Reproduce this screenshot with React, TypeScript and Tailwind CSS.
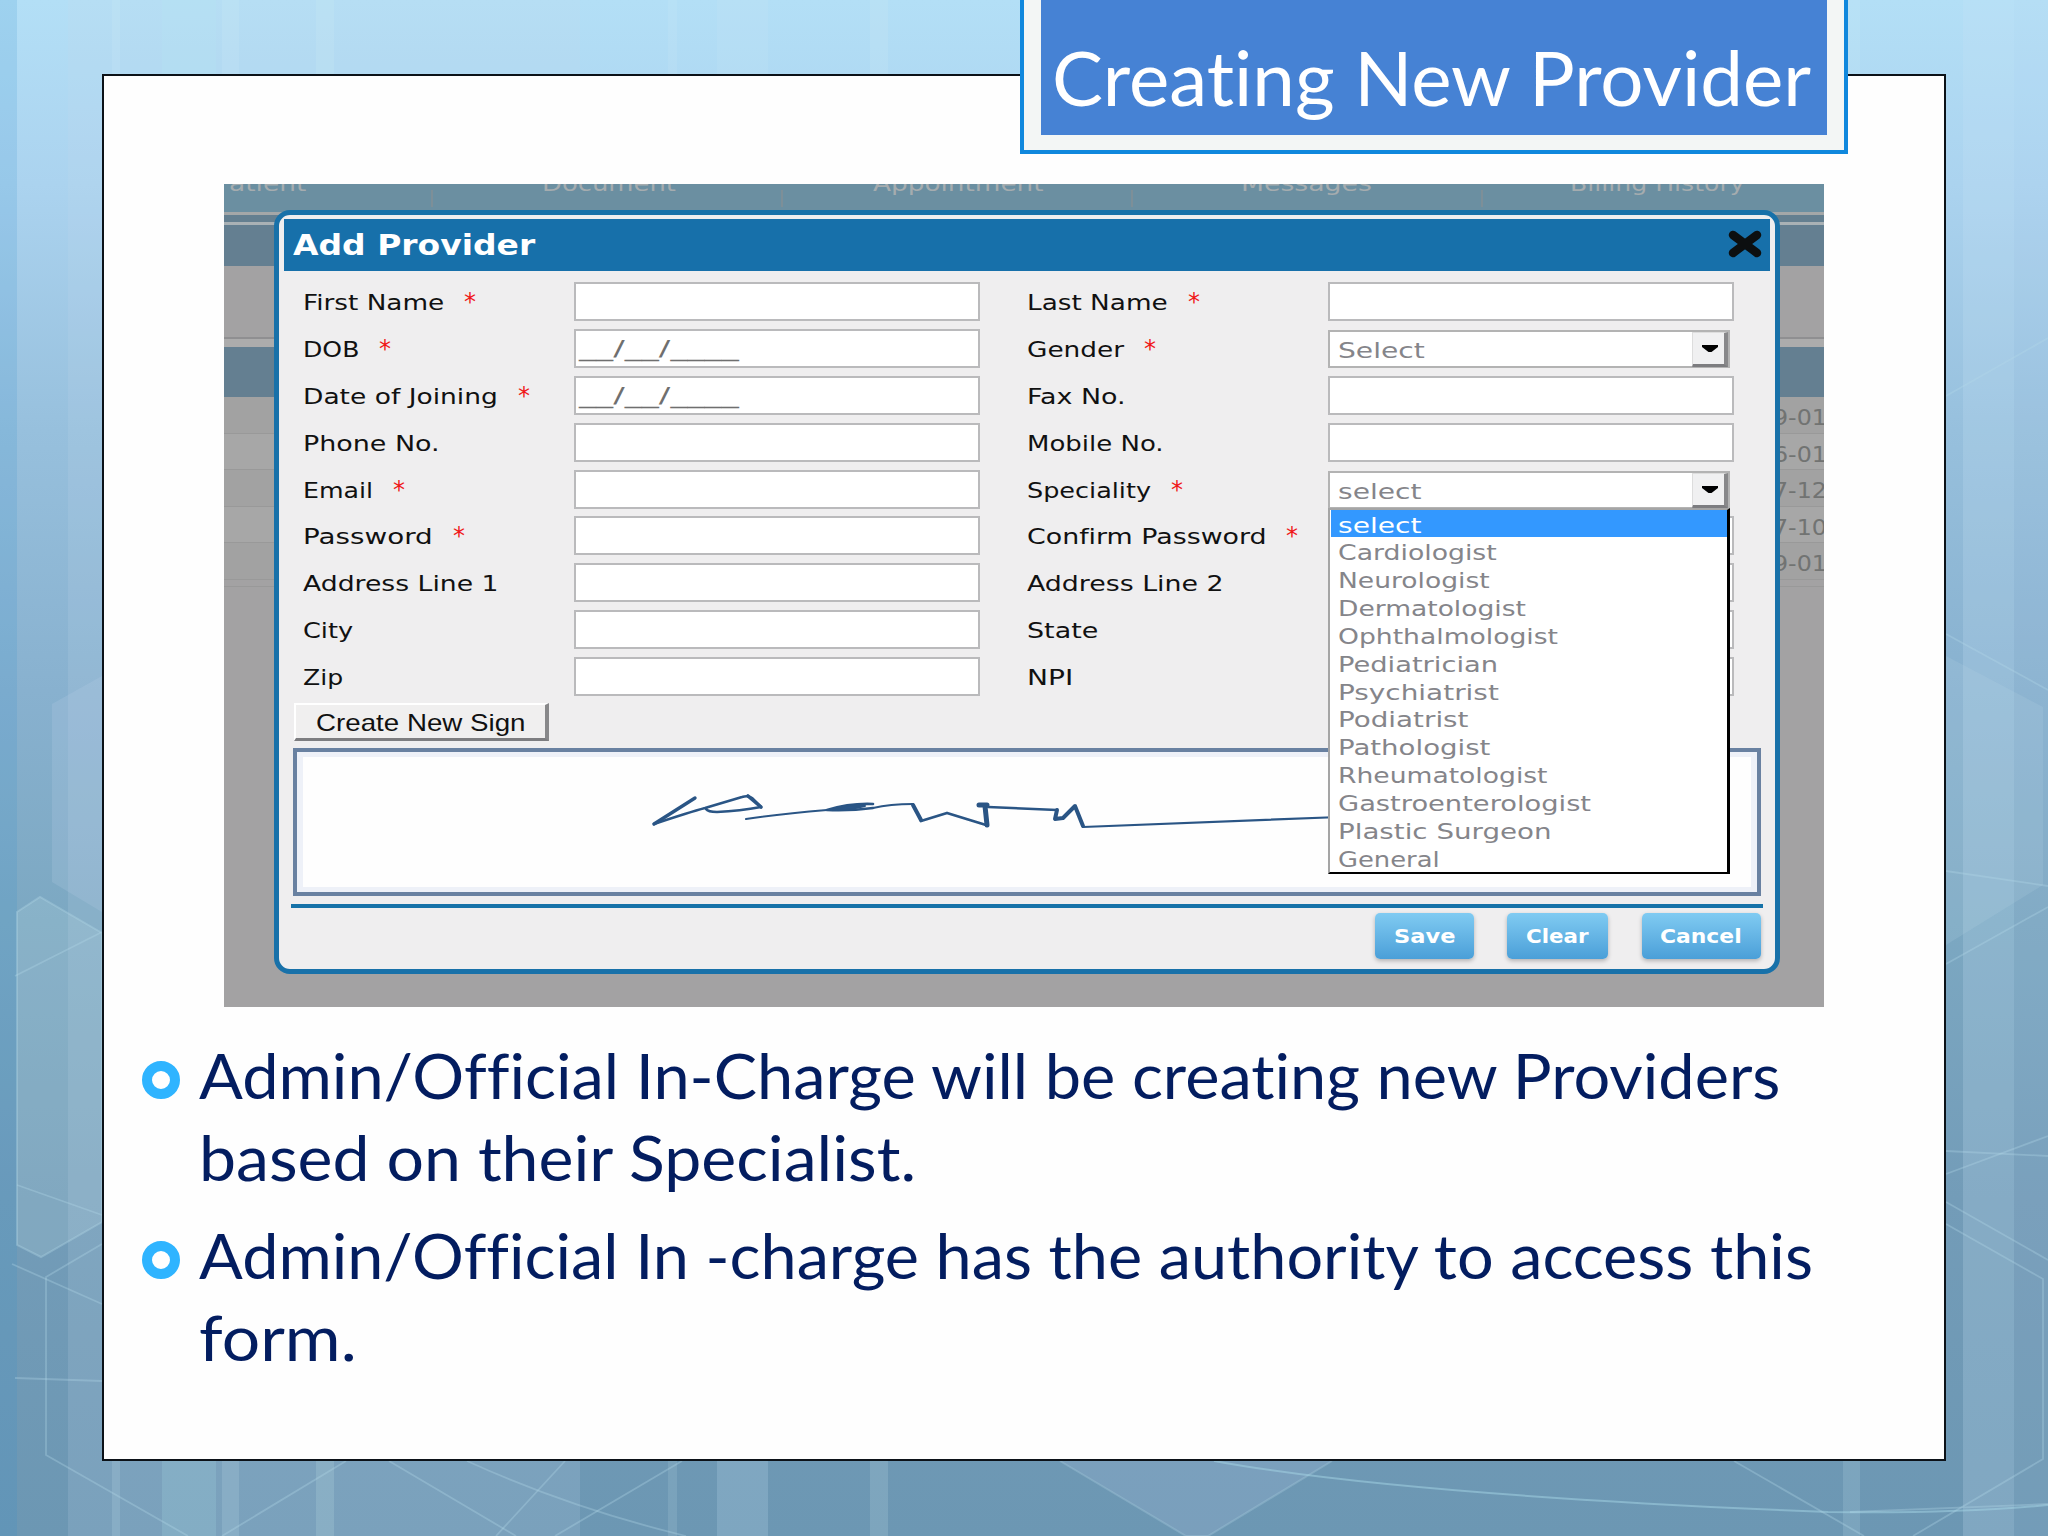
import { useLayoutEffect, useRef, useState } from 'react';

interface FitProps {
  text: string;
  width: number;
  className?: string;
}

// Single line of text stretched horizontally to a given width
function Fit({ text, width, className = '' }: FitProps) {
  const ref = useRef<HTMLSpanElement>(null);
  const [scale, setScale] = useState(1);

  useLayoutEffect(() => {
    if (ref.current) {
      setScale(width / ref.current.offsetWidth);
    }
  }, [text, width]);

  return (
    <span className={`block shrink-0 whitespace-nowrap ${className}`} style={{ width }}>
      <span ref={ref} className="inline-block origin-left" style={{ transform: `scaleX(${scale})` }}>
        {text}
      </span>
    </span>
  );
}

type FieldKind = 'text' | 'date' | 'select' | 'speciality';

interface Field {
  label: string;
  width: number;
  required?: boolean;
  kind?: FieldKind;
}

const leftFields: Field[] = [
  { label: 'First Name', width: 141, required: true },
  { label: 'DOB', width: 56, required: true, kind: 'date' },
  { label: 'Date of Joining', width: 195, required: true, kind: 'date' },
  { label: 'Phone No.', width: 137 },
  { label: 'Email', width: 70, required: true },
  { label: 'Password', width: 130, required: true },
  { label: 'Address Line 1', width: 195 },
  { label: 'City', width: 50 },
  { label: 'Zip', width: 40 },
];

const rightFields: Field[] = [
  { label: 'Last Name', width: 141, required: true },
  { label: 'Gender', width: 97, required: true, kind: 'select' },
  { label: 'Fax No.', width: 99 },
  { label: 'Mobile No.', width: 137 },
  { label: 'Speciality', width: 124, required: true, kind: 'speciality' },
  { label: 'Confirm Password', width: 239, required: true },
  { label: 'Address Line 2', width: 196 },
  { label: 'State', width: 71 },
  { label: 'NPI', width: 46 },
];

const specialities = [
  { name: 'select', width: 83 },
  { name: 'Cardiologist', width: 159 },
  { name: 'Neurologist', width: 152 },
  { name: 'Dermatologist', width: 188 },
  { name: 'Ophthalmologist', width: 220 },
  { name: 'Pediatrician', width: 160 },
  { name: 'Psychiatrist', width: 161 },
  { name: 'Podiatrist', width: 130 },
  { name: 'Pathologist', width: 153 },
  { name: 'Rheumatologist', width: 209 },
  { name: 'Gastroenterologist', width: 253 },
  { name: 'Plastic Surgeon', width: 214 },
  { name: 'General', width: 102 },
];

const bands = [
  { x: 0, w: 17, fill: '#2f8fd0', o: 0.16 },
  { x: 68, w: 512, fill: '#c9d8ee', o: 0.16 },
  { x: 112, w: 8, fill: '#d5f0f5', o: 0.15 },
  { x: 162, w: 54, fill: '#b5ecf0', o: 0.16 },
  { x: 222, w: 17, fill: '#d5f0f5', o: 0.15 },
  { x: 316, w: 18, fill: '#d5f0f5', o: 0.16 },
  { x: 668, w: 9, fill: '#d5f0f5', o: 0.13 },
  { x: 717, w: 51, fill: '#c9e4f5', o: 0.2 },
  { x: 870, w: 18, fill: '#d5f0f5', o: 0.17 },
  { x: 1843, w: 17, fill: '#d5f0f5', o: 0.15 },
  { x: 1963, w: 51, fill: '#c9e4f5', o: 0.22 },
  { x: 2014, w: 34, fill: '#c9d8ee', o: 0.08 },
];

const lines = [
  'M15 976 102 932',
  'M17 1185 102 1215',
  'M12 1264 102 1304',
  'M15 1378 102 1381',
  'M102 1244 46 1277V1455L188 1536',
  'M222 1536 346 1461',
  'M389 1461 516 1536',
  'M467 1461Q570 1508 686 1536',
  'M565 1461 496 1536',
  'M682 1461 555 1536',
  'M1734 1461 1864 1536',
  'M1913 1536 2043 1459V1279L1946 1224',
  'M1946 396 2048 338',
  'M1946 634 2048 690',
  'M1946 871 2048 886',
  'M1946 964 2048 907',
  'M1946 1151 2048 1156',
  'M1946 1174 2048 1136',
  'M1946 1202 2048 1260',
  'M1850 1512 2048 1504',
];

function Backdrop() {
  return (
    <svg className="absolute inset-0" width="2048" height="1536" viewBox="0 0 2048 1536" fill="none">
      <defs>
        <linearGradient id="sky" x1="0" y1="0" x2="0" y2="1">
          <stop offset="0" stopColor="#b3dff6" />
          <stop offset="0.12" stopColor="#abd3ef" />
          <stop offset="0.28" stopColor="#97c0dd" />
          <stop offset="0.45" stopColor="#88b1cf" />
          <stop offset="0.6" stopColor="#7ca8c2" />
          <stop offset="0.78" stopColor="#739cb8" />
          <stop offset="1" stopColor="#6c97b3" />
        </linearGradient>
      </defs>
      <rect width="2048" height="1536" fill="url(#sky)" />
      {bands.map((b) => (
        <rect key={b.x} x={b.x} width={b.w} height="1536" fill={b.fill} opacity={b.o} />
      ))}
      <path d="M52 704 102 676V912L52 882Z" fill="#c0d0ec" opacity="0.2" />
      <path d="M1946 656 2043 707V885L1946 945Z" fill="#c0dcec" opacity="0.15" />
      <path
        d="M17 912 40 897 102 933V1222L41 1257 17 1245Z"
        fill="#b8d4e0"
        fillOpacity="0.22"
        stroke="#b5dbe8"
        strokeOpacity="0.35"
        strokeWidth="2"
      />
      <path
        d="M1060 1461 1186 1536H1208L1332 1461"
        fill="#a5b8d8"
        fillOpacity="0.25"
        stroke="#a5cbdc"
        strokeOpacity="0.35"
        strokeWidth="2"
      />
      <path d="M1214 1461Q1400 1495 1828 1512Q1950 1514 2048 1505" stroke="#a5d5e5" strokeOpacity="0.5" strokeWidth="2" />
      {lines.map((d) => (
        <path key={d} d={d} stroke="#b5dbe8" strokeOpacity="0.32" strokeWidth="1.8" />
      ))}
    </svg>
  );
}

const navItems = [
  { text: 'atient', width: 77, cell: 'w-[209px] pl-[5px]' },
  { text: 'Document', width: 134, cell: 'w-[350px] pl-[109px]' },
  { text: 'Appointment', width: 171, cell: 'w-[350px] pl-[90px]' },
  { text: 'Messages', width: 131, cell: 'w-[350px] pl-[108px]' },
  { text: 'Billing History', width: 175, cell: 'w-[341px] pl-[87px]' },
];

const dates = ['9-01', '6-01', '7-12', '7-10', '9-01'];

// Greyed-out page behind the dialog
function DimmedPage() {
  return (
    <div className="flex h-full w-full flex-col bg-[#a3a2a3] text-[22px]">
      <div className="flex h-[28px] shrink-0 overflow-hidden bg-[#6b8fa1] text-[#a5acaf]">
        {navItems.map((item) => (
          <div key={item.text} className={`flex shrink-0 ${item.cell}`}>
            <Fit text={item.text} width={item.width} className="-mt-[15px] h-[30px] leading-[30px]" />
            {item.text !== 'Billing History' && <div className="mt-[6px] ml-auto h-[17px] w-[2px] bg-[#7d8f98]" />}
          </div>
        ))}
      </div>
      <div className="h-[3px] shrink-0 bg-[#a4a7a8]" />
      <div className="h-[7px] shrink-0 bg-[#647f90]" />
      <div className="h-[3px] shrink-0 bg-[#a9b1b5]" />
      <div className="h-[41px] shrink-0 bg-[#647f91]" />
      <div className="h-[73px] shrink-0 border-b-2 border-[#8f8f91] bg-[#a3a2a3]" />
      <div className="h-[8px] shrink-0 bg-[#acacac]" />
      <div className="h-[50px] shrink-0 bg-[#647f91]" />
      {dates.map((date, i) => (
        <div
          key={i}
          className={`flex h-[36.5px] shrink-0 justify-end overflow-hidden border-b border-[#999999] leading-[42px] text-[#717372] ${
            i % 2 === 0 ? 'bg-[#a2a2a2]' : 'bg-[#a7a7a7]'
          }`}
        >
          <Fit text={date} width={54} className="-mr-[3px]" />
        </div>
      ))}
      <div className="h-[7px] border-b border-[#999999]" />
    </div>
  );
}

function SelectBox({ text, width }: { text: string; width: number }) {
  return (
    <div className="mt-px flex h-[38px] w-[402px] border-2 border-[#b3b3b3] bg-white pl-[8px]">
      <Fit text={text} width={width} className="leading-[37px] text-[#85858a]" />
      <div className="ml-auto flex h-[35px] w-[36px] items-center justify-center border-t border-r-4 border-b-3 border-l border-t-[#dddddd] border-r-[#88888a] border-b-[#7d7d80] border-l-[#dddddd] bg-[#f0f0f1]">
        <svg className="ml-[2px]" width="16" height="7" viewBox="0 0 16 7">
          <path d="M0 0H16V2L9.500 7H6.500L0 2Z" fill="#000" />
        </svg>
      </div>
    </div>
  );
}

function SpecialityMenu() {
  return (
    <div className="absolute top-[38px] left-0 z-10 h-[366px] w-[402px] border-2 border-r-3 border-t-[#a5a5a5] border-r-black border-b-black border-l-[#a5a5a5] bg-white pl-px">
      {specialities.map((s, i) => (
        <div
          key={s.name}
          className={`h-[27.85px] pl-[7px] text-[22px] leading-[31px] ${
            i === 0 ? 'bg-[#3398ff] text-white' : 'text-[#85858a]'
          }`}
        >
          <Fit text={s.name} width={s.width} />
        </div>
      ))}
    </div>
  );
}

function FieldControl({ kind = 'text' }: { kind?: FieldKind }) {
  if (kind === 'select') {
    return <SelectBox text="Select" width={87} />;
  }
  if (kind === 'speciality') {
    return (
      <div className="relative">
        <SelectBox text="select" width={83} />
        <SpecialityMenu />
      </div>
    );
  }
  return (
    <div className="h-[39px] w-[406px] border-2 border-[#bababc] bg-white pl-[3px] leading-[35px] text-[#6f6f6f]">
      {kind === 'date' && <Fit text="__/__/____" width={160} />}
    </div>
  );
}

function FieldColumn({ fields, labelClass }: { fields: Field[]; labelClass: string }) {
  return (
    <div className="flex flex-col">
      {fields.map((field) => (
        <div key={field.label} className="flex h-[46.9px] shrink-0 items-start">
          <div className={`flex shrink-0 leading-[42px] ${labelClass}`}>
            <Fit text={field.label} width={field.width} />
            {field.required && <span className="ml-[20px] text-[24px] leading-[40px] text-[#f01818]">*</span>}
          </div>
          <FieldControl kind={field.kind} />
        </div>
      ))}
    </div>
  );
}

function Signature() {
  return (
    <svg
      className="ml-[337px]"
      width="720"
      height="130"
      viewBox="640 757 720 130"
      fill="none"
      stroke="#2a5585"
      strokeLinejoin="round"
      strokeLinecap="round"
    >
      <path d="M695 798 654 824" strokeWidth="3.4" />
      <path d="M654 824Q690 812 705 808L742 797Q748 795 752 798L761 807Q740 811 717 812 708 812 706 809" strokeWidth="2.6" />
      <path d="M748 796 761 807" strokeWidth="3.6" />
      <path d="M746 819Q780 814 827 810" strokeWidth="2" />
      <path d="M827 810Q850 803 873 804M827 810Q850 811 873 808" strokeWidth="2.6" />
      <path d="M831 810Q850 805 865 806 850 810 831 810" fill="#2a5a92" strokeWidth="2" />
      <path d="M873 808Q890 804 913 804" strokeWidth="2" />
      <path d="M913 805 921 820" strokeWidth="4" />
      <path d="M921 821 947 813 986 825" strokeWidth="2.8" />
      <path d="M979 805H987M985 806 987 825" strokeWidth="5" />
      <path d="M988 807 1057 810" strokeWidth="2.4" />
      <path d="M1057 810 1055 819 1063 818 1075 806 1083 826" strokeWidth="4" />
      <path d="M1083 827 1340 817" strokeWidth="2.2" />
    </svg>
  );
}

const actions = [
  { text: 'Save', width: 62, size: 'w-[99px]' },
  { text: 'Clear', width: 62, size: 'ml-[33px] w-[101px] pr-[2px]' },
  { text: 'Cancel', width: 82, size: 'ml-[34px] w-[119px] pr-[2px]' },
];

function AddProviderDialog() {
  return (
    <div className="absolute top-[26px] left-[50px] flex h-[764px] w-[1506px] flex-col rounded-[16px] border-5 border-[#1871a9] bg-[#efeeef] text-[22px] text-[#111111]">
      <div className="mx-[5px] mt-[4px] flex h-[52px] shrink-0 items-center bg-[#1770aa] pr-[8px] pl-[9px]">
        <Fit text="Add Provider" width={242} className="text-[29px] leading-[54px] font-bold text-white" />
        <svg className="mb-[3px] ml-auto" width="34" height="28" viewBox="0 0 34 28">
          <path d="M5 5 29 23M29 5 5 23" stroke="#0c0f10" strokeWidth="8.5" strokeLinecap="round" />
        </svg>
      </div>

      <div className="mt-[11px] flex h-[421px] shrink-0 pl-[24px]">
        <FieldColumn fields={leftFields} labelClass="w-[271px]" />
        <div className="ml-[47px]">
          <FieldColumn fields={rightFields} labelClass="w-[301px]" />
        </div>
      </div>

      <div className="ml-[15px] flex h-[38px] w-[255px] shrink-0 justify-center border-2 border-r-4 border-b-3 border-t-white border-r-[#88888a] border-b-[#7d7d80] border-l-white bg-[#f0efef] leading-[35px]">
        <Fit text="Create New Sign" width={209} className="font-['Liberation_Sans'] text-[24px]" />
      </div>

      <div className="mt-[7px] ml-[14px] h-[148px] w-[1468px] shrink-0 border-4 border-[#6981a1] bg-[#eef1f8] px-[6px] py-[5px]">
        <div className="h-full w-full overflow-hidden bg-[#fefefe]">
          <Signature />
        </div>
      </div>

      <div className="mt-[8px] ml-[12px] h-[4px] w-[1472px] shrink-0 bg-[#1672a8]" />

      <div className="mt-[5px] flex justify-end pr-[14px]">
        {actions.map((action) => (
          <button
            key={action.text}
            className={`flex h-[46px] items-center justify-center rounded-[5px] bg-linear-to-b from-[#80cbf2] to-[#4a9fd8] shadow-[0_2px_4px_rgba(0,0,0,0.25)] ${action.size}`}
          >
            <Fit text={action.text} width={action.width} className="text-left text-[20px] font-bold text-white" />
          </button>
        ))}
      </div>
    </div>
  );
}

const bullets = [
  [
    { text: 'Admin/Official In-Charge will be creating new Providers', width: 1581 },
    { text: 'based on their Specialist.', width: 717 },
  ],
  [
    { text: 'Admin/Official In -charge has the authority to access this', width: 1614 },
    { text: 'form.', width: 158 },
  ],
];

export default function App() {
  return (
    <div className="relative h-[1536px] w-[2048px] overflow-hidden font-['DejaVu_Sans',sans-serif] [font-variant-ligatures:none]">
      <Backdrop />

      <div className="relative mt-[74px] ml-[102px] h-[1387px] w-[1844px] border-2 border-[#0c1218] bg-[#fefefe] pt-[108px]">
        <div className="relative ml-[120px] h-[823px] w-[1600px] overflow-hidden">
          <DimmedPage />
          <AddProviderDialog />
        </div>

        <ul className="mt-[28px] flex flex-col gap-[16px] font-['Lato'] text-[61px] leading-[82px] text-[#031d60]">
          {bullets.map((bullet, i) => (
            <li key={i} className="flex">
              <span className="mt-[26px] mr-[19px] ml-[38px] h-[38px] w-[38px] shrink-0 rounded-full border-10 border-[#2fb4ff]" />
              <div>
                {bullet.map((line) => (
                  <Fit key={line.text} text={line.text} width={line.width} />
                ))}
              </div>
            </li>
          ))}
        </ul>
      </div>

      {/* Title tab over the top edge of the panel */}
      <div className="absolute top-0 left-[1020px] h-[154px] w-[828px] border-4 border-t-0 border-[#1088dd] bg-[#f3f6f5] px-[17px]">
        <div className="h-[135px] bg-[#4682d4] pt-[29px] pl-[11px]">
          <Fit text="Creating New Provider" width={759} className="font-['Lato'] text-[75px] leading-[96px] text-white" />
        </div>
      </div>
    </div>
  );
}
